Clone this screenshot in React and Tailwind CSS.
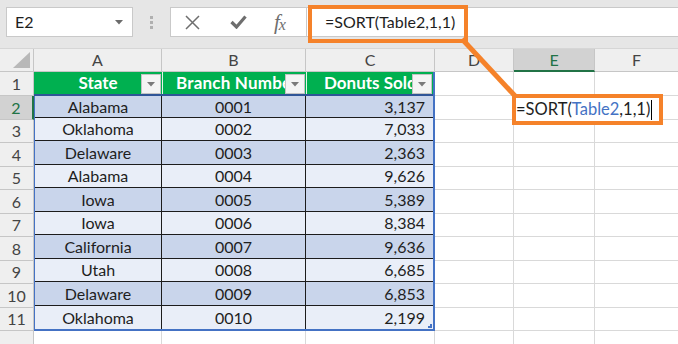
import React from 'react'

const rows = [
  ['Alabama', '0001', '3,137'],
  ['Oklahoma', '0002', '7,033'],
  ['Delaware', '0003', '2,363'],
  ['Alabama', '0004', '9,626'],
  ['Iowa', '0005', '5,389'],
  ['Iowa', '0006', '8,384'],
  ['California', '0007', '9,636'],
  ['Utah', '0008', '6,685'],
  ['Delaware', '0009', '6,853'],
  ['Oklahoma', '0010', '2,199'],
]

// row heights for rows 1..11
const heights = ['h-[24px]', 'h-[24px]', 'h-[23px]', 'h-[24px]', 'h-[23px]', 'h-[24px]', 'h-[23px]', 'h-[24px]', 'h-[23px]', 'h-[24px]', 'h-[23px]']

const FilterButton = () => (
  <div className="absolute right-[1px] top-[2px] w-[20px] h-[20px] bg-[#f4f4f4] border border-[#c3c3c3] flex items-center justify-center">
    <svg width="8" height="5" viewBox="0 0 8 5"><path d="M0 0h8L4 4.5z" fill="#7a7a7a" /></svg>
  </div>
)

const App = () => {
  return (
    <div className="relative w-[678px] h-[344px] overflow-hidden bg-white font-['Lato','Liberation_Sans',sans-serif] text-[16px] text-[#1e1e1e]">
      {/* formula bar */}
      <div className="h-[48px] bg-[#e6e6e6] flex items-start pt-[7px]">
        <div className="ml-[6px] w-[127px] h-[30px] bg-white border border-[#c9c9c9] flex items-center pl-[8px] pr-[9px] justify-between">
          <span>E2</span>
          <svg width="8" height="5" viewBox="0 0 8 5"><path d="M0 0h8L4 4.5z" fill="#6b6b6b" /></svg>
        </div>
        <div className="w-[37px] h-[30px] flex flex-col items-center justify-center gap-[2px]">
          <span className="w-[3px] h-[3px] bg-[#b0b0b0]"></span>
          <span className="w-[3px] h-[3px] bg-[#b0b0b0]"></span>
          <span className="w-[3px] h-[3px] bg-[#b0b0b0]"></span>
        </div>
        <div className="w-[137px] h-[30px] bg-white border border-[#c9c9c9] flex items-center pl-[14px]">
          <svg width="15" height="15" viewBox="0 0 15 15"><path d="M1 1l13 13M14 1L1 14" stroke="#6e6e6e" strokeWidth="1.5" /></svg>
          <svg className="ml-[30px]" width="17" height="14" viewBox="0 0 17 14"><path d="M1.5 7l5 5 9-10.5" stroke="#6e6e6e" strokeWidth="3.2" fill="none" /></svg>
          <div className="ml-[27px] flex items-end font-['Liberation_Serif',serif] italic text-[#6e6e6e] leading-none">
            <span className="text-[21px]">f</span><span className="text-[16px] -ml-[1px]">x</span>
          </div>
        </div>
        <div className="flex-1 h-[30px] bg-white border-y border-[#c9c9c9] flex items-center pl-[18px]">
          =SORT(Table2,1,1)
        </div>
      </div>

      {/* column headers */}
      <div className="flex h-[24px] bg-[#efefef] text-[#444] border-t border-[#d6d6d6]">
        <div className="w-[34px] border-r border-b border-[#c6c6c6] flex items-end justify-end pr-[3px] pb-[3px]">
          <svg width="17" height="16" viewBox="0 0 17 16"><path d="M17 0v16H0z" fill="#b8b8b8" /></svg>
        </div>
        <div className="w-[128px] border-r border-b border-[#c6c6c6] flex items-center justify-center">A</div>
        <div className="w-[144px] border-r border-b border-[#c6c6c6] flex items-center justify-center">B</div>
        <div className="w-[129px] border-r border-b border-[#c6c6c6] flex items-center justify-center">C</div>
        <div className="w-[79px] border-r border-b border-[#c6c6c6] flex items-center justify-center">D</div>
        <div className="w-[81px] bg-[#d2d2d2] text-[#217346] border-r border-[#c6c6c6] border-b-2 border-b-[#217346] flex items-center justify-center">E</div>
        <div className="w-[83px] border-b border-[#c6c6c6] flex items-center justify-center">F</div>
      </div>

      <div className="flex">
        {/* row headers */}
        <div className="w-[34px] flex flex-col text-[#444]">
          {heights.map((h, i) => (
            <div key={i} className={i === 1
              ? `${h} bg-[#d2d2d2] text-[#217346] border-r-2 border-[#217346] border-b border-b-[#c6c6c6] flex items-center justify-center`
              : `${h} bg-[#efefef] border-r border-b border-[#c6c6c6] flex items-center justify-center`}>{i + 1}</div>
          ))}
          <div className="h-[20px] bg-[#efefef] border-r border-[#c6c6c6]"></div>
        </div>

        {/* table A:C */}
        <div className="w-[401px] flex flex-col">
          <div className="border-r-2 border-b-2 border-l border-[#4472c4]">
            <div className="flex h-[24px] bg-[#00b050] text-white font-bold text-[17px] border-b-2 border-[#2f5597] -ml-[1px]">
              <div className="relative w-[129px] border-r border-[#e6f5ea] flex items-center justify-center overflow-hidden">
                <span>State</span>
                <FilterButton />
              </div>
              <div className="relative w-[144px] border-r border-[#e6f5ea] flex items-center pl-[13px] overflow-hidden whitespace-nowrap">
                <span className="tracking-[0.2px]">Branch Number</span>
                <FilterButton />
              </div>
              <div className="relative w-[126px] flex items-center pl-[17px] overflow-hidden whitespace-nowrap">
                <span>Donuts Sold</span>
                <FilterButton />
              </div>
            </div>
            {rows.map((r, i) => (
              <div key={i} className={`flex ${i === 0 ? 'h-[22px]' : heights[i + 1]} ${i % 2 === 0 ? 'bg-[#c9d5eb]' : 'bg-[#e9eef8]'} ${i < rows.length - 1 ? 'border-b border-[#1c1c1c]' : ''}`}>
                <div className="w-[127px] border-r border-[#1c1c1c] flex items-center justify-center">{r[0]}</div>
                <div className="w-[144px] border-r border-[#1c1c1c] flex items-center justify-center">{r[1]}</div>
                <div className="relative w-[127px] flex items-center justify-end pr-[8px]">
                  {r[2]}
                  {i === rows.length - 1 && (
                    <span className="absolute right-[1px] bottom-[1px] w-[4px] h-[4px] border-r-2 border-b-2 border-[#4472c4]"></span>
                  )}
                </div>
              </div>
            ))}
          </div>
          <div className="flex h-[20px]">
            <div className="w-[128px] border-r border-[#d9d9d9]"></div>
            <div className="w-[144px] border-r border-[#d9d9d9]"></div>
            <div className="w-[129px] border-r border-[#d9d9d9]"></div>
          </div>
        </div>

        {/* D:F */}
        <div className="flex-1 flex flex-col">
          {heights.concat(['h-[20px]']).map((h, i) => (
            <div key={i} className={`flex ${h}`}>
              <div className="w-[79px] border-r border-b border-[#d9d9d9]"></div>
              <div className="w-[81px] border-r border-b border-[#d9d9d9]"></div>
              <div className="w-[83px] border-b border-[#d9d9d9]"></div>
            </div>
          ))}
        </div>
      </div>

      {/* callout overlays */}
      <svg className="absolute left-0 top-0 pointer-events-none" width="678" height="344">
        <line x1="462" y1="39" x2="516" y2="97" stroke="#f5822a" strokeWidth="5" />
      </svg>
      <div className="absolute left-[308px] top-[5px] w-[160px] h-[38px] border-4 border-[#f5822a]"></div>
      <div className="absolute left-[512px] top-[94px] w-[151px] h-[31px] border-4 border-[#f5822a] bg-white flex items-center whitespace-nowrap text-[16.5px]">
        <span>=SORT(</span>
        <span className="text-[#4472c4]">Table2</span>
        <span>,1,1)</span>
        <span className="ml-[1px] w-[1px] h-[20px] bg-black"></span>
      </div>
    </div>
  )
}

export default App
